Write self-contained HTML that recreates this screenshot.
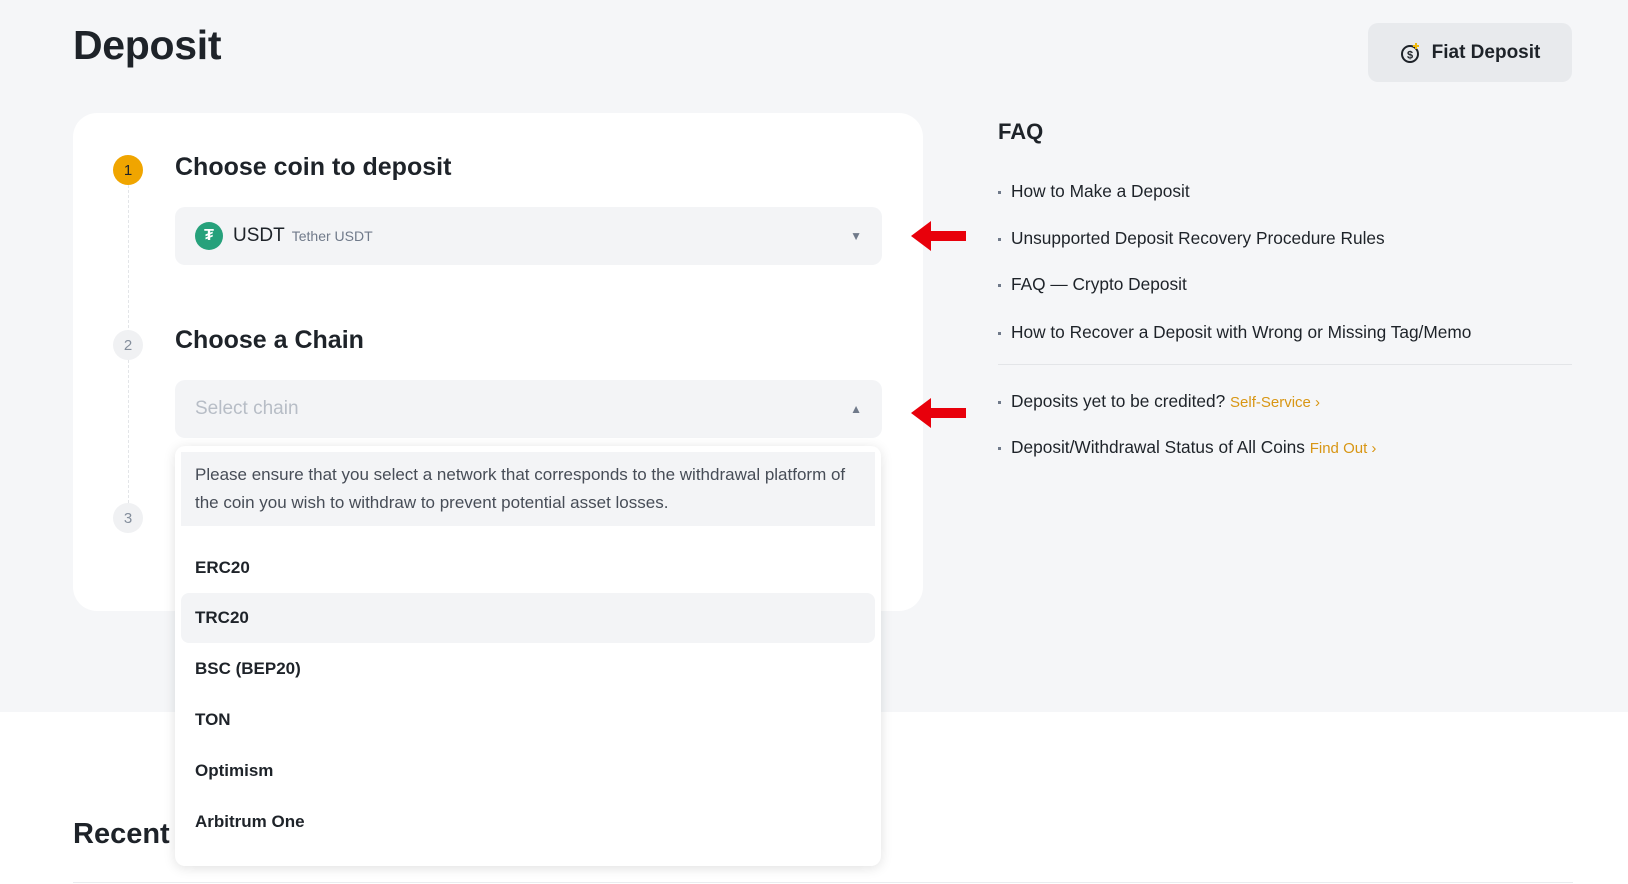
<!DOCTYPE html>
<html><head><meta charset="utf-8"><style>
*{margin:0;padding:0;box-sizing:border-box}
body{width:1628px;height:884px;overflow:hidden;background:#fff;font-family:"Liberation Sans",sans-serif;color:#1e2329;position:relative}
.top{position:absolute;left:0;top:0;width:1628px;height:712px;background:#f5f6f8}
.abs{position:absolute}
h1{position:absolute;left:73px;top:22px;font-size:41px;font-weight:bold;letter-spacing:-0.3px}
.fiat{left:1368px;top:23px;width:204px;height:59px;background:#e8eaed;border-radius:10px;font-size:19px;font-weight:bold;display:flex;align-items:center;justify-content:center;gap:10px}
.card{left:73px;top:113px;width:850px;height:498px;background:#fff;border-radius:24px}
.step{width:30px;height:30px;border-radius:50%;background:#f0f1f3;color:#848e9c;font-size:15px;display:flex;align-items:center;justify-content:center}
.h2{font-size:25px;font-weight:bold}
.sel{left:175px;width:707px;height:58px;background:#f3f4f6;border-radius:10px;display:flex;align-items:center;padding:0 20px}
.dd{left:175px;top:446px;width:706px;height:420px;background:#fff;border-radius:10px;box-shadow:0 2px 12px rgba(0,0,0,.12)}
.note{position:absolute;left:6px;top:6px;width:694px;height:74px;background:#f3f4f6;color:#474d57;font-size:17px;line-height:28px;padding:9px 14px}
.it{position:absolute;left:6px;width:694px;height:50px;border-radius:8px;font-size:17px;font-weight:bold;padding-left:14px;line-height:50px}
.faq{left:998px;font-size:17.3px;white-space:nowrap}
.faq:before{content:"";display:inline-block;width:3px;height:3px;background:#707a8a;margin-right:10px;vertical-align:middle}
.or{color:#d89614;font-size:15px}
.arrow{width:56px;height:30px}
</style></head><body>
<div class="top"></div>
<h1>Deposit</h1>
<div class="abs fiat"><svg width="22" height="22" viewBox="0 0 22 22"><circle cx="10" cy="12" r="8" fill="none" stroke="#1e2329" stroke-width="2"/><text x="10" y="16.5" font-size="11" font-weight="bold" text-anchor="middle" fill="#1e2329" font-family="Liberation Sans">$</text><path d="M16 1v6M13 4h6" stroke="#f0b90b" stroke-width="2"/></svg>Fiat Deposit</div>

<div class="abs card"></div>
<div class="abs" style="left:128px;top:185px;height:333px;border-left:1px dashed #e3e5e8"></div>
<div class="abs step" style="left:113px;top:155px;background:#f0a500;color:#1e2329">1</div>
<div class="abs h2" style="left:175px;top:153px">Choose coin to deposit</div>
<div class="abs sel" style="top:207px"><span style="width:28px;height:28px;border-radius:50%;background:#26a17b;color:#fff;font-weight:bold;display:flex;align-items:center;justify-content:center;font-size:16px">₮</span><span style="font-size:19px;margin-left:10px">USDT</span><span style="font-size:14px;color:#707a8a;margin-left:7px">Tether USDT</span><span style="margin-left:auto;color:#707a8a;font-size:12px">▼</span></div>
<div class="abs step" style="left:113px;top:330px">2</div>
<div class="abs h2" style="left:175px;top:326px">Choose a Chain</div>
<div class="abs sel" style="top:380px"><span style="font-size:19px;color:#b7bdc6">Select chain</span><span style="margin-left:auto;color:#707a8a;font-size:12px">▲</span></div>
<div class="abs step" style="left:113px;top:503px">3</div>

<div class="abs" style="left:73px;top:818px;font-size:29px;font-weight:bold">Recent</div>
<div class="abs" style="left:73px;top:882px;width:1500px;border-top:1px solid #eaecef"></div>

<div class="abs dd">
<div class="note">Please ensure that you select a network that corresponds to the withdrawal platform of the coin you wish to withdraw to prevent potential asset losses.</div>
<div class="it" style="top:97px">ERC20</div>
<div class="it" style="top:147px;background:#f3f4f6">TRC20</div>
<div class="it" style="top:198px">BSC (BEP20)</div>
<div class="it" style="top:249px">TON</div>
<div class="it" style="top:300px">Optimism</div>
<div class="it" style="top:351px">Arbitrum One</div>
</div>

<div class="abs" style="left:998px;top:119px;font-size:22px;font-weight:bold">FAQ</div>
<div class="abs faq" style="top:181px">How to Make a Deposit</div>
<div class="abs faq" style="top:228px">Unsupported Deposit Recovery Procedure Rules</div>
<div class="abs faq" style="top:274px">FAQ — Crypto Deposit</div>
<div class="abs faq" style="top:322px">How to Recover a Deposit with Wrong or Missing Tag/Memo</div>
<div class="abs" style="left:998px;top:364px;width:574px;border-top:1px solid #e3e5e8"></div>
<div class="abs faq" style="top:391px">Deposits yet to be credited? <span class="or">Self-Service ›</span></div>
<div class="abs faq" style="top:437px">Deposit/Withdrawal Status of All Coins <span class="or">Find Out ›</span></div>

<svg class="abs arrow" style="left:911px;top:221px" viewBox="0 0 56 30"><path d="M0 15L20 0V10H55V20H20V30Z" fill="#e8000b"/></svg>
<svg class="abs arrow" style="left:911px;top:398px" viewBox="0 0 56 30"><path d="M0 15L20 0V10H55V20H20V30Z" fill="#e8000b"/></svg>
</body></html>
